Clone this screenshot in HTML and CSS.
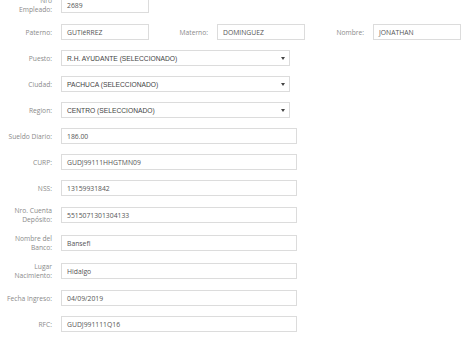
FILE: index.html
```html
<!DOCTYPE html>
<html lang="es">
<head>
    <meta charset="UTF-8">
    <meta name="viewport" content="width=device-width, initial-scale=1.0">
    <title>Datos del Empleado</title>
    <link rel="stylesheet" href="styles.css">
</head>
<body>
    <form class="employee-form">
        <div class="form-row">
            <label class="form-label">Nro<br>Empleado:</label>
            <div class="field short">2689</div>
        </div>

        <div class="form-row names">
            <div class="name-pair">
                <label class="form-label">Paterno:</label>
                <div class="field short">GUTIéRREZ</div>
            </div>
            <div class="name-pair">
                <label class="form-label">Materno:</label>
                <div class="field short">DOMINGUEZ</div>
            </div>
            <div class="name-pair">
                <label class="form-label">Nombre:</label>
                <div class="field short">JONATHAN</div>
            </div>
        </div>

        <div class="form-row">
            <label class="form-label">Puesto:</label>
            <div class="field select"><span>R.H. AYUDANTE (SELECCIONADO)</span><span class="caret"></span></div>
        </div>

        <div class="form-row">
            <label class="form-label">Ciudad:</label>
            <div class="field select"><span>PACHUCA (SELECCIONADO)</span><span class="caret"></span></div>
        </div>

        <div class="form-row">
            <label class="form-label">Region:</label>
            <div class="field select"><span>CENTRO (SELECCIONADO)</span><span class="caret"></span></div>
        </div>

        <div class="form-row">
            <label class="form-label">Sueldo Diario:</label>
            <div class="field wide">186.00</div>
        </div>

        <div class="form-row">
            <label class="form-label">CURP:</label>
            <div class="field wide">GUDJ99111HHGTMN09</div>
        </div>

        <div class="form-row">
            <label class="form-label">NSS:</label>
            <div class="field wide">13159931842</div>
        </div>

        <div class="form-row">
            <label class="form-label">Nro. Cuenta<br>Depósito:</label>
            <div class="field wide">5515071301304133</div>
        </div>

        <div class="form-row">
            <label class="form-label">Nombre del<br>Banco:</label>
            <div class="field wide">Bansefi</div>
        </div>

        <div class="form-row">
            <label class="form-label">Lugar<br>Nacimiento:</label>
            <div class="field wide">Hidalgo</div>
        </div>

        <div class="form-row">
            <label class="form-label">Fecha Ingreso:</label>
            <div class="field wide">04/09/2019</div>
        </div>

        <div class="form-row">
            <label class="form-label">RFC:</label>
            <div class="field wide">GUDJ991111Q16</div>
        </div>
    </form>
</body>
</html>
```

FILE: styles.css
```css
* {
    box-sizing: border-box;
    margin: 0;
    padding: 0;
}

body {
    font-family: 'Open Sans', 'Noto Sans', sans-serif;
    background: #fff;
    color: #555;
    overflow: hidden;
}

.employee-form {
    margin-top: -4px;
    width: 474px;
}

.form-row {
    display: flex;
    align-items: center;
    margin-bottom: 10px;
}

.names {
    display: grid;
    grid-template-columns: 156px 156px 156px;
}

.name-pair {
    display: flex;
    align-items: center;
}

.form-label {
    width: 52px;
    margin-right: 9px;
    text-align: right;
    font-size: 6.7px;
    line-height: 9px;
    color: #8a8a8a;
    flex-shrink: 0;
}

.field {
    height: 16px;
    border: 1px solid #dcdcdc;
    padding: 0 5px;
    display: flex;
    align-items: center;
    font-size: 6.8px;
    color: #555;
    background: #fff;
}

.short {
    width: 88px;
}

.wide {
    width: 236px;
}

.select {
    width: 229px;
    font-family: 'Liberation Sans', Arial, sans-serif;
    font-size: 6.7px;
    color: #444;
    padding-right: 4px;
}

.caret {
    margin-left: auto;
    width: 0;
    height: 0;
    border-left: 2px solid transparent;
    border-right: 2px solid transparent;
    border-top: 3px solid #444;
}
```
